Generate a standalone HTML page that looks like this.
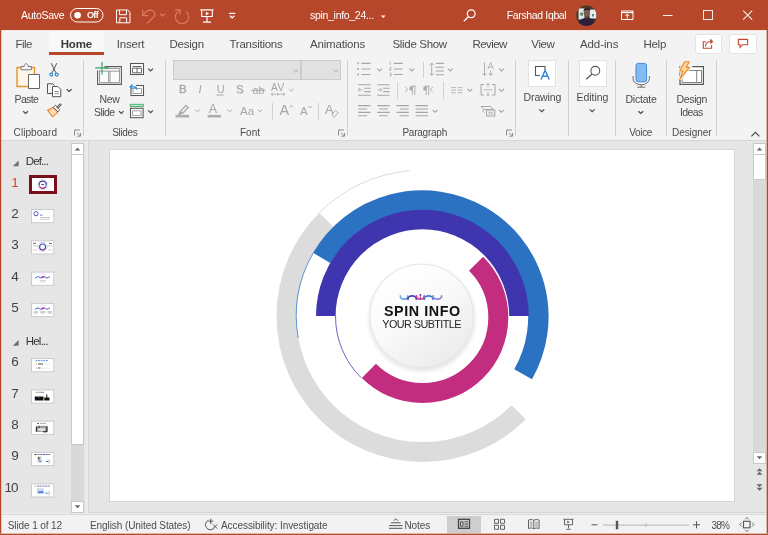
<!DOCTYPE html>
<html><head><meta charset="utf-8">
<style>
*{box-sizing:border-box;margin:0;padding:0}
html,body{width:768px;height:535px;overflow:hidden;background:#e6e6e6;font-family:"Liberation Sans",sans-serif}
#w{position:absolute;left:0;top:0;width:768px;height:535px;overflow:hidden;background:#e6e6e6}
.a{position:absolute}
.t{position:absolute;white-space:nowrap;line-height:1;font-family:"Liberation Sans",sans-serif}
svg{position:absolute;left:0;top:0}
.th{position:absolute;left:31px;width:23px;height:14px;background:#fff;border:1px solid #d2d2d2;overflow:hidden}
</style></head><body>
<div id="w">
<!-- chrome backgrounds -->
<div class="a" style="left:0;top:0;width:768px;height:30px;background:#b7472a"></div>
<div class="a" style="left:0;top:30px;width:768px;height:110px;background:#f3f3f3"></div>
<div class="a" style="left:0;top:30px;width:768px;height:1px;background:#f3e4df"></div>
<div class="a" style="left:0;top:140px;width:768px;height:1px;background:#d6d6d6"></div>
<!-- home tab -->
<div class="a" style="left:49px;top:31px;width:55px;height:22px;background:#f8f8f8"></div>
<div class="a" style="left:49px;top:52px;width:55px;height:2.5px;background:#b7472a"></div>
<!-- share / comments -->
<div class="a" style="left:695px;top:34px;width:26.5px;height:19.5px;background:#fff;border:1px solid #e4e4e4;border-radius:2px"></div>
<div class="a" style="left:729px;top:34px;width:27.5px;height:19.5px;background:#fff;border:1px solid #e4e4e4;border-radius:2px"></div>
<!-- font combos -->
<div class="a" style="left:173px;top:60px;width:128px;height:20px;background:#e1e1e1;border:1px solid #cbcbcb"></div>
<div class="a" style="left:301px;top:60px;width:40px;height:20px;background:#e1e1e1;border:1px solid #cbcbcb"></div>
<!-- drawing / editing boxes -->
<div class="a" style="left:528px;top:60px;width:28px;height:26.5px;background:#fff;border:1px solid #e2e2e2"></div>
<div class="a" style="left:579px;top:60px;width:28px;height:26.5px;background:#fff;border:1px solid #e2e2e2"></div>

<!-- WORKSPACE -->
<!-- left scrollbar -->
<div class="a" style="left:71px;top:142.5px;width:13px;height:370px;background:#d9d9d9"></div>
<div class="a" style="left:71px;top:142.5px;width:13px;height:12.5px;background:#fff;border:1px solid #c8c8c8"></div>
<div class="a" style="left:71px;top:155px;width:13px;height:290px;background:#fff;border:1px solid #c8c8c8;border-top:0"></div>
<div class="a" style="left:71px;top:500.5px;width:13px;height:12.5px;background:#fff;border:1px solid #c8c8c8"></div>
<!-- splitter -->
<div class="a" style="left:86px;top:141px;width:2px;height:374px;background:#ececec"></div>
<div class="a" style="left:88px;top:141px;width:1px;height:374px;background:#d6d6d6"></div>
<!-- edit area bottom line -->
<div class="a" style="left:89px;top:512px;width:677px;height:1px;background:#d4d4d4"></div>
<!-- right scrollbar -->
<div class="a" style="left:753px;top:142.5px;width:13px;height:321px;background:#d9d9d9"></div>
<div class="a" style="left:753px;top:142.5px;width:13px;height:12.5px;background:#fff;border:1px solid #c8c8c8"></div>
<div class="a" style="left:753px;top:155px;width:13px;height:24.5px;background:#fff;border:1px solid #c8c8c8;border-top:0"></div>
<div class="a" style="left:753px;top:451.5px;width:13px;height:12px;background:#fff;border:1px solid #c8c8c8"></div>
<!-- slide -->
<div class="a" style="left:108.5px;top:148.5px;width:626.5px;height:353px;background:#fff;border:1px solid #d6d6d6"></div>

<!-- thumbnails -->
<div class="a" style="left:28.800px;top:175.300px;width:28px;height:19.200px;background:#fff;border:3px solid #7a0f1c"></div>
<svg width="768" height="535" viewBox="0 0 768 535" fill="none">
<circle cx="42.7" cy="184.7" r="3.5" stroke="#5f7fda" stroke-width="1.1"/>
<path d="M40 187.200a3.600 3.600 0 0 0 5.800-.6" stroke="#c32d80" stroke-width="1.200"/>
<path d="M39 184.700a3.700 3.700 0 0 1 7.400 0" stroke="#3f35ae" stroke-width="1.100"/>
<circle cx="42.700" cy="184.700" r="5.200" stroke="#dcdcdc" stroke-width=".8"/>
<path d="M41.300 184.600h2.800" stroke="#333" stroke-width=".9"/>
<rect x="31.500" y="209.5" width="22.300" height="13.200" fill="#fff" stroke="#cbcbcb" stroke-width="1"/>
<circle cx="36" cy="213.7" r="2.1" stroke="#4a62c8" stroke-width="1"/>
<path d="M35 215.4a2 2 0 0 0 2.400-.4" stroke="#c32d80" stroke-width=".8"/>
<path d="M40 215.1h2.500" stroke="#5a6fd0" stroke-width=".9"/>
<path d="M40 217.7h9.500" stroke="#8fb0b8" stroke-width="1" stroke-dasharray="1.500 .5"/>
<path d="M40 219.5h9.500" stroke="#d9c0c8" stroke-width=".7"/>
<rect x="31.500" y="240.8" width="22.300" height="13.200" fill="#fff" stroke="#cbcbcb" stroke-width="1"/>
<circle cx="42.600" cy="247.0" r="3" stroke="#3f4fc0" stroke-width="1.200"/>
<path d="M40.300 249.0a3 3 0 0 0 4.600 0" stroke="#c32d80" stroke-width="1"/>
<circle cx="42.600" cy="247.0" r="4.600" stroke="#c8d4ee" stroke-width=".6"/>
<path d="M33 243.4h3M49 243.4h3" stroke="#445" stroke-width=".8"/>
<path d="M33 245.9h5.500M47 245.9h5.500" stroke="#9bc0a8" stroke-width=".7"/>
<path d="M33 249.9h4M48.500 249.9h4" stroke="#d8a8b8" stroke-width=".7"/>
<path d="M40.500 242.6h4.500" stroke="#a8b8e8" stroke-width=".7"/>
<rect x="31.500" y="272.1" width="22.300" height="13.200" fill="#fff" stroke="#cbcbcb" stroke-width="1"/>
<path d="M35 277.9c1.500 0 1.500-1.200 3-1.200s1.500 1.200 3 1.200 1.500-1.200 3-1.200 1.500 1.200 3 1.200 1.500-1.200 3-1.200" stroke="#3f55c8" stroke-width="1"/>
<circle cx="42.700" cy="277.1" r="1.100" fill="#d0307c"/>
<path d="M39.500 275.7a3.400 3.400 0 0 1 6.400 0" stroke="#c8cff0" stroke-width=".6"/>
<path d="M39.500 280.7h6.500" stroke="#b8b8c0" stroke-width=".8"/>
<path d="M40 282.1h5.500" stroke="#d8c8d0" stroke-width=".6"/>
<rect x="31.500" y="303.4" width="22.300" height="13.200" fill="#fff" stroke="#cbcbcb" stroke-width="1"/>
<path d="M35 309.2c1.500 0 1.500-1.200 3-1.200s1.500 1.200 3 1.200 1.500-1.200 3-1.200 1.500 1.200 3 1.200 1.500-1.200 3-1.200" stroke="#3f55c8" stroke-width="1"/>
<circle cx="42.700" cy="308.4" r="1.100" fill="#d0307c"/>
<path d="M39.500 307.0a3.400 3.400 0 0 1 6.400 0" stroke="#c8cff0" stroke-width=".6"/>
<path d="M33.500 312.0h4.500M40.300 312.0h5M47.500 312.0h4.500" stroke="#9aa0b0" stroke-width="1.100"/>
<path d="M33.500 313.6h4.500M40.300 313.6h5M47.500 313.6h4.500" stroke="#d0c8d0" stroke-width=".6"/>
<rect x="31.500" y="358.6" width="22.300" height="13.200" fill="#fff" stroke="#cbcbcb" stroke-width="1"/>
<path d="M35.500 360.6h13" stroke="#7fa6d8" stroke-width="1.300" stroke-dasharray="2 .6"/>
<path d="M35.800 364.2h1.200" stroke="#e8a030" stroke-width="1"/><path d="M38 364.0h5" stroke="#333" stroke-width=".9"/>
<path d="M44 364.2h6" stroke="#d8d8d8" stroke-width=".6"/>
<path d="M35.800 368.2h1.200" stroke="#e8a030" stroke-width="1"/><path d="M38 368.0h2.500" stroke="#444" stroke-width=".9"/>
<path d="M41.500 368.2h8.500" stroke="#d0d0d0" stroke-width=".7" stroke-dasharray="1.500 .6"/>
<rect x="31.500" y="389.9" width="22.300" height="13.200" fill="#fff" stroke="#cbcbcb" stroke-width="1"/>
<path d="M35.500 392.3h5" stroke="#c8a060" stroke-width=".9"/><path d="M40.500 392.3h3.500" stroke="#6a78c0" stroke-width=".9"/>
<path d="M34.800 396.5h8.700v4h-8.700zM44.300 397.5h5.200v3h-5.200zM46.300 394.5h1v3h-1z" fill="#111"/>
<path d="M38 397.3h1.200" stroke="#4aa0e0" stroke-width=".8"/>
<rect x="31.500" y="421.2" width="22.300" height="13.200" fill="#fff" stroke="#cbcbcb" stroke-width="1"/>
<path d="M37 423.4h2" stroke="#333" stroke-width=".8"/><path d="M40 423.4h6" stroke="#8a90b8" stroke-width=".8"/>
<path d="M36 425.8h11.500v6h-11.500z" fill="#9a9a9a"/>
<path d="M36.300 426.8v5M39 426.3v5M47 426.3v5.500" stroke="#222" stroke-width="1"/>
<path d="M38 428.3h7v2.500h-7z" fill="#e8e8e8"/>
<path d="M43 431.8h4" stroke="#111" stroke-width="1"/>
<rect x="31.500" y="452.4" width="22.300" height="13.200" fill="#fff" stroke="#cbcbcb" stroke-width="1"/>
<path d="M34.500 454.5h2" stroke="#222" stroke-width=".9"/><path d="M37.500 454.5h13" stroke="#6a58b0" stroke-width=".9" stroke-dasharray="2.200 .5"/>
<path d="M37.500 456.5h4v6h-4z" fill="#c8ccd8"/><path d="M38 457.0h1.500v2.500h-1.500z" fill="#555"/><path d="M39 460.5h2.500v1.800h-2.500z" fill="#7fa8e0"/>
<path d="M46 461.5h2" stroke="#2e70d0" stroke-width="1"/><path d="M48.500 460.0h1.500v3h-1.500z" stroke="#aab" stroke-width=".5"/>
<rect x="31.500" y="483.8" width="22.300" height="13.200" fill="#fff" stroke="#cbcbcb" stroke-width="1"/>
<path d="M34.500 486.1h1.500" stroke="#e0a030" stroke-width=".9"/><path d="M36.800 486.1h13" stroke="#5a70c0" stroke-width=".9" stroke-dasharray="2.200 .5"/>
<path d="M37 488.4h6.500v5.500h-6.500z" fill="#b8cdf0"/><path d="M38.500 491.4h5v1.500h-5z" fill="#3a78e0"/><path d="M38 488.9h3v1.500h-3z" fill="#d8dce8"/>
<path d="M45.500 493.2h2" stroke="#2e70d0" stroke-width="1"/><path d="M48.300 491.7h1.500v3h-1.500z" stroke="#aab" stroke-width=".5"/>
<rect x="31.500" y="515.1" width="22.300" height="13.200" fill="#fff" stroke="#cbcbcb" stroke-width="1"/>
</svg>

<div class="a" style="left:0;top:0;width:768px;height:535px;will-change:transform">
<div class="t" style="left:4.4px;top:511.9px;font-size:13.5px;color:#444;letter-spacing:-0.36px;">11</div>
</div>
<!-- STATUS BAR -->
<div class="a" style="left:0;top:513px;width:768px;height:1px;background:#ebebeb"></div>
<div class="a" style="left:0;top:514px;width:768px;height:1.500px;background:#d9d9d9"></div>
<div class="a" style="left:0;top:515.300px;width:768px;height:20px;background:#f2f2f2"></div>
<div class="a" style="left:447px;top:515.500px;width:34px;height:18px;background:#cecece"></div>

<!-- ICONS + SLIDE ART -->
<svg width="768" height="535" viewBox="0 0 768 535" fill="none">
<defs>
<linearGradient id="cg" x1="0.2" y1="0.1" x2="0.8" y2="0.95"><stop offset="0" stop-color="#ffffff"/><stop offset="0.45" stop-color="#f9f9f9"/><stop offset="1" stop-color="#ebebeb"/></linearGradient>
<radialGradient id="sh" cx="0.5" cy="0.5" r="0.5"><stop offset="0.86" stop-color="#000" stop-opacity="0.13"/><stop offset="1" stop-color="#000" stop-opacity="0"/></radialGradient>
<linearGradient id="gl" x1="0" y1="1" x2="1" y2="0"><stop offset="0" stop-color="#cfcfcf"/><stop offset="1" stop-color="#e2e2e2"/></linearGradient>
</defs>
<path d="M518.67 412.27A136 136 0 0 1 326.33 219.93" stroke="#dcdcdc" stroke-width="20" />
<path d="M319.26 212.86A146 146 0 0 1 409.78 170.66" stroke="#d2d2d2" stroke-width="0.8" />
<path d="M321.87 258.00A116.2 116.2 0 0 1 523.13 374.20" stroke="#2c72c2" stroke-width="20.4" />
<path d="M313.21 253.00A126.2 126.2 0 0 0 298.22 338.01" stroke="#3b7fd0" stroke-width="0.8" />
<path d="M325.80 316.10A96.5 96.5 0 0 1 519.00 316.10" stroke="#3f35ae" stroke-width="19.6" />
<path d="M335.50 316.10A87 87 0 0 0 360.98 377.62" stroke="#4a3db0" stroke-width="0.8" />
<path d="M476.10 263.70A75.8 75.8 0 0 1 368.90 370.90" stroke="#c32d80" stroke-width="20" />
<circle cx="421.8" cy="318.2" r="56" fill="url(#sh)"/>
<circle cx="421.6" cy="315.8" r="51.6" fill="url(#cg)" stroke="#e7e7e7" stroke-width="1.1"/>
<path d="M400.3 295.9a3.80 3.3 0 0 0 7.60 0" stroke="#6ea8e8" stroke-width="1.7" stroke-linecap="round"/>
<path d="M407.9 299.2a4.25 3.3 0 0 1 8.50 0" stroke="#4a3db8" stroke-width="1.7" stroke-linecap="round"/>
<path d="M416.4 295.9a3.90 3.3 0 0 0 7.80 0" stroke="#d03a8a" stroke-width="1.7" stroke-linecap="round"/>
<path d="M424.2 299.2a4.40 3.3 0 0 1 8.80 0" stroke="#3a7bd0" stroke-width="1.7" stroke-linecap="round"/>
<path d="M433.0 295.9a4.30 3.3 0 0 0 8.60 0" stroke="#8a80e0" stroke-width="1.7" stroke-linecap="round"/>
<circle cx="420.3" cy="295" r="1" fill="#4a3db8"/>
<path d="M420.3 296.2v2.8" stroke="#d03a8a" stroke-width="1.2"/>
<!-- ===== TITLE BAR ICONS ===== -->
<g stroke="#fff" stroke-width="1" fill="none">
  <!-- autosave pill -->
  <rect x="70.5" y="8.5" width="32.5" height="13.5" rx="6.75"/>
  <circle cx="77.6" cy="15.2" r="3.3" fill="#fff" stroke="none"/>
  <!-- save -->
  <path d="M116.5 10h11.2l2.3 2.3v10.5h-13.5z"/>
  <path d="M119.5 10v4.7h7v-4.7"/>
  <path d="M119.8 22.8v-5h6.8v5"/>
  <!-- present -->
  <path d="M200.300 9.900h13.200" stroke-width="1.300"/>
  <path d="M201.700 10.200v6.300h10.600v-6.300" stroke-width="1.100"/>
  <path d="M205.800 11.700v3.700l3.300-1.850z" fill="#fff" stroke="none"/>
  <path d="M207 16.600v5.400M203 22.200h8" stroke-width="1.200"/>
  <!-- customize qat -->
  <path d="M229.100 13.400h6.200" stroke-width="1.200"/>
  <path d="M230 15.800l2.150 2.100 2.150-2.100" stroke-width="1.300"/>
  <!-- file dropdown -->
  <path d="M380.8 15.4h4.8l-2.4 2.6z" fill="#fff" stroke="none"/>
  <!-- search -->
  <circle cx="471.2" cy="13.8" r="3.9" stroke-width="1.2"/>
  <path d="M468.4 16.8l-4.6 4.5" stroke-width="1.3"/>
  <!-- ribbon display -->
  <path d="M621.5 11h11.5v8.5h-11.5z"/>
  <path d="M621.5 12.6h11.5" stroke-width="1.2"/>
  <path d="M627.2 18.5v-4M625.3 16l1.9-1.9 1.9 1.9"/>
  <!-- min max close -->
  <path d="M663 15.500h9.500" stroke-opacity=".9"/>
  <rect x="703.500" y="10.500" width="9" height="9" stroke-opacity=".9"/>
  <path d="M743.200 10.600l9 9M752.200 10.600l-9 9" stroke-width="1.050" stroke-opacity=".92"/>
</g>
<!-- undo / redo (dimmed) -->
<g stroke="#dc7a61" stroke-width="1.250" fill="none" stroke-linecap="round" stroke-linejoin="round">
  <path d="M142.700 10v5.600h5"/>
  <path d="M143 15.400c2-4 5.800-6 9-4.900c3.200 1.100 3.700 4.600 1.500 6.800l-6.200 5.800"/>
  <path d="M160.400 14.100l2.200 2 2.200-2" stroke-width="1.300"/>
  <path d="M186.400 11.800A6.700 6.700 0 1 1 177 12.600L180.100 9.900"/>
  <path d="M175.600 9.900h4.500v4.300"/>
</g>
<!-- avatar -->
<clipPath id="av"><circle cx="586.5" cy="15.7" r="10.2"/></clipPath>
<g clip-path="url(#av)">
  <rect x="576" y="5" width="21" height="21" fill="#3b3230"/>
  <rect x="578.500" y="8" width="6" height="11.500" fill="#dfe6ea"/>
  <rect x="589.500" y="9.500" width="7" height="9" fill="#e6ebf0"/>
  <rect x="576" y="5" width="21" height="3.400" fill="#4d3826"/>
  <rect x="580.200" y="12.600" width="2.800" height="3" fill="#5d8a4e"/>
  <rect x="592" y="14" width="2" height="2.500" fill="#6d8a70"/>
  <ellipse cx="586.800" cy="12.600" rx="3.100" ry="4.300" fill="#7b5a50"/>
  <path d="M583.400 11c.3-3.600 6.500-3.600 6.900 0c-2-1.600-5-1.600-6.900 0z" fill="#1d1718"/>
  <path d="M577.500 26.500c.5-6 4-8.500 9.300-8.500s8.800 2.500 9.300 8.500z" fill="#2b1f3a"/>
  <path d="M585.400 17.600l1.400 1.600 1.400-1.600z" fill="#6b4a44"/>
</g>
<!-- share / comments -->
<g stroke="#bf4a30" stroke-width="1.1" fill="none">
  <path d="M706 41.8h-2.7v6.4h8.300v-3"/>
  <path d="M705.400 46.500c.2-3 2.300-4.900 5.600-5"/>
  <path d="M710.300 38.600l3 2.900-3 2.900z" fill="#bf4a30" stroke="none"/>
  <path d="M738.400 39.400h9.200v5.300h-5l-2.600 2.600v-2.600h-1.600z"/>
</g>

<!-- ===== RIBBON separators ===== -->
<g stroke="#d2d2d2" stroke-width="1">
  <path d="M83.500 60v76M165.500 60v76M347.500 60v76M515.500 60v76M568.500 60v76M615.500 60v76M666.500 60v76M716.500 60v76"/>
  <path d="M272.500 103v17M318.500 103v17M423.500 61.500v16.500M397.500 82v17.500M443.500 82v17.500"/>
</g>
<!-- chevrons dark -->
<g stroke="#4a4a4a" stroke-width="1.200" fill="none">
  <path d="M23.200 111.200l2.400 2.300 2.400-2.300"/>
  <path d="M66.800 89.200l2.400 2.300 2.400-2.300"/>
  <path d="M119 111.200l2.300 2.300 2.300-2.300"/>
  <path d="M148.200 68.600l2.400 2.300 2.400-2.300"/>
  <path d="M148.200 110.400l2.400 2.300 2.400-2.300"/>
  <path d="M539.300 109.400l2.500 2.300 2.500-2.300"/>
  <path d="M589.700 109.400l2.500 2.300 2.500-2.300"/>
  <path d="M638.400 111.200l2.400 2.300 2.400-2.300"/>
  <path d="M751.400 136.400l4-4 4 4" stroke-width="1.2"/>
</g>
<!-- dialog launchers -->
<g stroke="#8a8a8a" stroke-width="1" fill="none">
  <path d="M74.500 135.500v-5.500h5.500M76.800 132.500l3.500 3.500M80.500 133v3.200h-3.200"/>
  <path d="M338.500 135.500v-5.500h5.500M340.800 132.500l3.500 3.500M344.500 133v3.200h-3.200"/>
  <path d="M506.500 135.500v-5.500h5.500M508.800 132.500l3.500 3.500M512.500 133v3.200h-3.200"/>
</g>

<!-- ===== CLIPBOARD ===== -->
<g fill="none" stroke-width="1">
  <!-- paste -->
  <path d="M17 67.500h17.500v19h-17.500z" fill="#fef5e8" stroke="#e8912d" stroke-width="1.400"/>
  <path d="M21 69.800v-3.300h3.200c0-1.700 1-2.800 2-2.800s2 1.100 2 2.800h3.200v3.300z" fill="#f3f3f3" stroke="#7a7a7a"/>
  <path d="M28.500 74.500h11v14h-11z" fill="#fff" stroke="#666"/>
  <!-- cut -->
  <path d="M51.200 63.200l4.700 9.600M56.800 63.200l-4.700 9.600" stroke="#555"/>
  <circle cx="51.300" cy="74.600" r="1.500" stroke="#2e86d6" stroke-width="1.100"/>
  <circle cx="56.700" cy="74.600" r="1.500" stroke="#2e86d6" stroke-width="1.100"/>
  <!-- copy -->
  <path d="M52 93.500h-4.500v-9.700h5.300l1.700 1.700" stroke="#555"/>
  <path d="M52.500 86.500h5.300l3 3v7.200h-8.300z" fill="#fff" stroke="#555"/>
  <path d="M54.500 91.500h4.300M54.500 93.700h4.300" stroke="#777" stroke-width=".8"/>
  <!-- format painter -->
  <path d="M47.600 110.300l5.600-3 4.700 4.500-5.300 5z" fill="#fbd3a4" stroke="#ec7a1c" stroke-width="1.100"/>
  <path d="M50.200 111.800l3.600 3.400M52.400 110.200l3.400 3.200" stroke="#fff" stroke-width=".9"/>
  <path d="M53.200 107.300l2.200-2 4.400 4.300-1.900 2.200z" fill="#f3f3f3" stroke="#555" stroke-width=".9"/>
  <path d="M57.800 107.200l2.600-2.600" stroke="#555" stroke-width="2.300" stroke-linecap="round"/>
  <path d="M57.900 107.100l2.400-2.400" stroke="#e8e8e8" stroke-width=".7" stroke-linecap="round"/>
</g>

<!-- ===== SLIDES ===== -->
<g fill="none" stroke="#555" stroke-width="1">
  <!-- new slide -->
  <path d="M97.600 66.600h23.800v17.800h-23.800z" fill="#fbfbfb" stroke="#5a5a5a" stroke-width="1.100"/>
  <path d="M99.500 68.600h20v14h-20z" stroke="#8e8e8e" stroke-width=".9"/>
  <path d="M99.500 71.200h20M108.600 71.200v11.400M110 71.200v11.400" stroke="#8e8e8e" stroke-width=".9"/>
  <path d="M93.500 64.500h11v6h-11z" fill="#f3f3f3" stroke="none"/>
  <path d="M99.500 70.500v4.500M104.500 68.600h1" stroke="#8e8e8e" stroke-width=".9"/>
  <path d="M95.200 67.800h13.500M102 62v12.400" stroke="#2fa866" stroke-width="1.200"/>
  <!-- layout -->
  <rect x="130.500" y="63.500" width="13" height="11" fill="#fff" stroke-width="1.050"/>
  <path d="M132.500 66.500h9M132.500 68.200h9v4.600h-9zM137 68.200v4.600" stroke-width=".9"/>
  <!-- reset -->
  <rect x="131" y="85.500" width="12.500" height="10" fill="#fff" stroke-width="1.050"/>
  <path d="M133 88.500h8.500v5h-8.500z" stroke="#888" stroke-width=".8"/>
  <path d="M128 83h8v5h-8z" fill="#f3f3f3" stroke="none"/>
  <path d="M130.300 86.800h3.700c1.700 0 2.700 1.100 2.700 2.600" stroke="#2e86d6" stroke-width="1.200"/>
  <path d="M132.500 84.500l-2.400 2.300 2.400 2.300" stroke="#2e86d6" stroke-width="1.200"/>
  <!-- section -->
  <rect x="130.300" y="104.300" width="13" height="2.200" fill="#bfe8cf" stroke="#3fae6e" stroke-width=".9"/>
  <rect x="130.500" y="108.300" width="12.600" height="9.400" fill="#fff" stroke-width="1.050"/>
  <path d="M132.500 110.800h8.600v4.800h-8.600z" stroke="#888" stroke-width=".8"/>
</g>

<!-- ===== FONT (disabled) ===== -->
<g fill="none" stroke="#a6a6a6" stroke-width="1">
  <path d="M293.200 69.700l2.400 2.300 2.400-2.300M333.400 69.700l2.400 2.300 2.400-2.300"/>
  <path d="M216.300 95h7.200"/>
  <path d="M251.500 90.300h14"/>
  <path d="M271 94.200h14M273 92.700l-1.800 1.500 1.800 1.500M283 92.700l1.800 1.500-1.800 1.500M277.500 93v2.400" stroke-width=".8"/>
  <path d="M289.200 89l2.200 2.100 2.200-2.100"/>
  <!-- highlighter -->
  <path d="M180.300 111.300l5.600-6 2.400 2.200-5.600 6z" stroke-width="1.150" fill="#e9e9e9"/>
  <path d="M180.300 111.300l-2 3.300 4.400-1.100" stroke-width="1" fill="#a6a6a6"/>
  <path d="M175.500 116.200h13.500" stroke="#adadad" stroke-width="2.600"/>
  <path d="M195.200 109.700l2.300 2.200 2.300-2.200"/>
  <path d="M207.600 116.200h13.500" stroke="#adadad" stroke-width="2.600"/>
  <path d="M227.400 109.700l2.300 2.200 2.300-2.200"/>
  <path d="M257.700 109.700l2.200 2.100 2.200-2.100"/>
  <path d="M289.500 107.300l1.800-1.800 1.800 1.800" stroke-width=".9"/>
  <path d="M308.300 106l1.800 1.800 1.800-1.800" stroke-width=".9"/>
  <!-- eraser -->
  <path d="M331.500 114.600l4.200-4.200 2.600 2.600-4.200 4.200z" fill="#f3f3f3" stroke-width=".9"/>
</g>

<!-- ===== PARAGRAPH (disabled) ===== -->
<g fill="none" stroke="#a6a6a6" stroke-width="1.100">
  <!-- bullets -->
  <path d="M361.500 63.400h9M361.500 69h9M361.500 74.500h9"/>
  <path d="M357.300 62.600h1.700v1.700h-1.700zM357.300 68.200h1.700v1.700h-1.700zM357.300 73.700h1.700v1.700h-1.700z" fill="#a6a6a6" stroke="none"/>
  <path d="M377.200 68.600l2.400 2.300 2.400-2.300"/>
  <!-- numbering -->
  <path d="M393.800 63.400h9M393.800 69h9M393.800 74.500h9"/>
  <path d="M390.300 61.800v3M389.600 67.600h1.500v1.400h-1.500v1.400h1.500M389.600 73h1.500v3h-1.500M389.900 74.500h1.200" stroke-width=".7"/>
  <path d="M409.400 68.600l2.400 2.300 2.400-2.300"/>
  <!-- line spacing -->
  <path d="M431.700 63v12.400M429.600 65.200l2.100-2.200 2.100 2.200M429.600 73.200l2.100 2.200 2.100-2.200" stroke-width=".9"/>
  <path d="M435.800 63.400h8M435.800 67.200h8M435.800 71h8M435.800 74.800h8"/>
  <path d="M447.900 68.600l2.400 2.300 2.400-2.300"/>
  <!-- text direction -->
  <path d="M484.500 62.500v13M482.400 73.300l2.100 2.200 2.100-2.200M490.700 70.500v5M488.600 73.300l2.100 2.200 2.100-2.200" stroke-width=".9"/>
  <path d="M487.800 69.500l2.900-7 2.900 7M488.800 67.200h3.800" stroke-width=".8"/>
  <path d="M499 68.600l2.400 2.300 2.400-2.300"/>
  <!-- indent dec/inc -->
  <path d="M358.200 84.700h12.400M364.200 88.200h6.400M364.200 91.600h6.400M358.200 95.200h12.400"/>
  <path d="M358.400 89.900h4.600M360.200 88l-1.900 1.900 1.900 1.900" stroke-width=".8"/>
  <path d="M377.200 84.700h12.400M383.200 88.200h6.400M383.200 91.600h6.400M377.200 95.200h12.400"/>
  <path d="M377.200 89.900h4.600M380 88l1.900 1.900-1.900 1.900" stroke-width=".8"/>
  <!-- ltr / rtl -->
  <path d="M405.200 87l2.400 2.600-2.400 2.600M432.800 87l-2.400 2.600 2.400 2.600" stroke-width=".8"/>
  <path d="M412.300 95v-8.800M414.800 95v-8.800M415.800 86.200h-4.300" stroke-width=".9"/><path d="M412.300 86.200h-.8a2.200 2.200 0 0 0 0 4.400h.8z" fill="#a6a6a6" stroke="none"/>
  <path d="M426.200 95v-8.800M428.700 95v-8.800M429.700 86.200h-4.300" stroke-width=".9"/><path d="M426.200 86.200h-.8a2.200 2.200 0 0 0 0 4.400h.8z" fill="#a6a6a6" stroke="none"/>
  <!-- columns -->
  <path d="M451 87.600h5M451 90.200h5M451 92.800h5M457.500 87.600h5M457.500 90.200h5M457.500 92.800h5" stroke-width=".8"/>
  <path d="M467.400 89l2.400 2.300 2.400-2.300"/>
  <!-- align text -->
  <path d="M484 84.500h-3v10.500h3M492 84.500h3v10.500h-3" stroke-width="1"/>
  <path d="M483.500 89.800h9M488 83.500v4M488 92v4M486.400 85l1.600-1.600 1.600 1.600M486.400 94.500l1.600 1.600 1.600-1.600" stroke-width=".8"/>
  <path d="M499 89l2.400 2.300 2.400-2.300"/>
  <!-- align rows -->
  <path d="M358.200 105.600h12.400M358.200 109h9M358.200 112.400h12.400M358.200 115.800h9"/>
  <path d="M377.200 105.600h12.400M379 109h8.800M377.200 112.400h12.400M379 115.800h8.800"/>
  <path d="M396.400 105.600h12.400M399.800 109h9M396.400 112.400h12.400M399.800 115.800h9"/>
  <path d="M415.600 105.600h12.400M415.600 109h12.400M415.600 112.400h12.400M415.600 115.800h12.400"/>
  <path d="M432.800 110l2.400 2.300 2.400-2.300"/>
  <!-- smartart -->
  <path d="M481 106.500h9.500l3 3h-9.500l-1.500 1.500 1.500 1.500" stroke-width="1"/>
  <path d="M481 106.500l3 3" stroke-width="1"/>
  <rect x="486.500" y="110" width="8.300" height="6" fill="#f3f3f3" stroke-width="1"/>
  <path d="M488.200 112.300h5M488.200 114h5" stroke-width=".7"/>
  <path d="M499 110l2.400 2.300 2.400-2.300"/>
</g>

<!-- ===== DRAWING / EDITING ===== -->
<g fill="none">
  <rect x="535.500" y="66.500" width="9.500" height="9" stroke="#555" stroke-width="1.100"/>
  <rect x="539.800" y="69.800" width="10.500" height="10.500" fill="#fff"/>
  <path d="M541 79.500l4.100-9.200 4.100 9.200M542.600 76.300h5" stroke="#2e86d6" stroke-width="1.400"/>
  <circle cx="595.300" cy="70.800" r="4.400" stroke="#555" stroke-width="1.100"/>
  <path d="M592 74l-5.800 5.300" stroke="#555" stroke-width="1.200"/>
</g>

<!-- ===== DICTATE ===== -->
<g fill="none">
  <rect x="636" y="63.400" width="10.600" height="18.400" rx="2.200" fill="#83bbee" stroke="#3d8bdb" stroke-width="1"/>
  <path d="M633 76v2.400a8.200 6.400 0 0 0 16.400 0v-2.400" stroke="#6b6b6b" stroke-width="1"/>
  <path d="M641.200 84.800v2.300M637.200 87.200h8" stroke="#6b6b6b" stroke-width="1"/>
</g>

<!-- ===== DESIGN IDEAS ===== -->
<g fill="none">
  <path d="M680 66.700h23.400v17.600h-23.400z" fill="#fff" stroke="#5a5a5a" stroke-width="1.200"/>
  <path d="M682 70.500h19.500M696.700 70.500v12M682 82.500h19.500v-12M682 70.500v12" stroke="#777" stroke-width=".9"/>
  <path d="M684.600 61.800h4.700l-3.100 5.600h3.300l-9.600 11.800 2.900-8.200h-3.100z" fill="#f3f3f3" stroke="#f3f3f3" stroke-width="3"/>
  <path d="M684.600 61.800h4.700l-3.100 5.600h3.300l-9.600 11.800 2.900-8.200h-3.100z" fill="#fcd69a" stroke="#ec8a2c" stroke-width="1.100" stroke-linejoin="round"/>
</g>

<!-- ===== scroll arrows ===== -->
<g fill="#666">
  <path d="M74.700 150.500l2.800-3 2.800 3z"/>
  <path d="M74.700 505.200l2.800 3 2.800-3z"/>
  <path d="M756.700 150.500l2.800-3 2.800 3z"/>
  <path d="M756.700 456.200l2.800 3 2.800-3z"/>
  <path d="M756.500 471.300l3-3 3 3zM756.500 474.800l3-3 3 3z"/>
  <path d="M756.500 484.200l3 3 3-3zM756.500 487.700l3 3 3-3z"/>
  <path d="M12.800 166.200h5.800v-5.800z" fill="#6e6e6e"/>
  <path d="M12.800 345.700h5.800v-5.800z" fill="#6e6e6e"/>
</g>

<!-- ===== STATUS ICONS ===== -->
<g fill="none" stroke="#555" stroke-width="1" transform="translate(0,0.8)">
  <!-- accessibility -->
  <path d="M208.600 519.400a5 5 0 1 0 5.600 8" stroke-width="1"/>
  <path d="M210.800 517.800v5.400M208.600 520.400h4.600" stroke-width="1"/>
  <path d="M213 523.600l4.200 4.200M217.200 523.600l-4.200 4.200" stroke-width="1"/>
  <!-- notes -->
  <path d="M389 527.500h13.500M389 524.800h13.500M391 522h9.500" />
  <path d="M393.500 520l2.300-2 2.300 2" stroke-width=".9"/>
  <!-- normal view -->
  <rect x="458.500" y="518.500" width="11" height="9" stroke-width="1.300" stroke="#444"/>
  <path d="M460.500 521h2.500v4.500h-2.500zM464.500 521h3.500M464.500 523.200h3.500M464.500 525.400h3.500" stroke="#444" stroke-width=".9"/>
  <!-- sorter -->
  <path d="M494.500 518.500h4v4h-4zM500.500 518.500h4v4h-4zM494.500 524.500h4v4h-4zM500.500 524.500h4v4h-4z" stroke-width=".9"/>
  <!-- reading -->
  <path d="M533.800 519.500v8.500M533.800 519.500c-1.500-1-3.500-1-5.300-.3v8.500c1.800-.7 3.800-.7 5.300.3c1.500-1 3.500-1 5.300-.3v-8.500c-1.800-.7-3.800-.7-5.300.3z" stroke-width=".9"/>
  <path d="M529.800 521.500h2.700M529.800 523.300h2.700M529.800 525.100h2.700M535.200 521.500h2.700M535.200 523.300h2.700M535.200 525.100h2.700" stroke-width=".6"/>
  <!-- slideshow -->
  <path d="M563.500 518.500h10M564.500 518.500v5.500h8v-5.500M568.500 524v3.500M566.300 528.500h4.400" stroke-width=".9"/>
  <path d="M567.300 520v2.600l2.400-1.300z" fill="#555" stroke="none"/>
  <!-- zoom -->
  <path d="M591.500 524h6" />
  <path d="M603 524.300h86" stroke="#b5b5b5" stroke-width="1"/>
  <path d="M646 522.500v3.600" stroke="#b5b5b5" stroke-width="1"/>
  <path d="M617 520v8.500" stroke="#555" stroke-width="2.400"/>
  <path d="M693 524h7M696.500 520.500v7" />
  <!-- fit -->
  <rect x="743.500" y="520.500" width="6.500" height="6.500" stroke-width="1.100"/>
  <path d="M744.800 518.600l2-1.800 2 1.800M744.800 529l2 1.800 2-1.800M741.600 521.800l-1.800 2 1.800 2M752 521.800l1.800 2-1.800 2" stroke-width=".8"/>
</g>

</svg>

<div class="a" id="tx" style="left:0;top:0;width:768px;height:535px;will-change:transform">
<div class="t" style="left:21.0px;top:9.8px;font-size:10.5px;color:#fff;letter-spacing:-0.28px;">AutoSave</div>
<div class="t" style="left:87.0px;top:10.9px;font-size:9px;color:#fff;font-weight:bold;letter-spacing:-0.67px;">Off</div>
<div class="t" style="left:310.0px;top:9.8px;font-size:10.5px;color:#fff;letter-spacing:-0.3px;">spin_info_24...</div>
<div class="t" style="left:506.8px;top:9.8px;font-size:10.5px;color:#fff;letter-spacing:-0.36px;">Farshad Iqbal</div>
<div class="t" style="left:15.5px;top:39.0px;font-size:11.5px;color:#4c4c4c;letter-spacing:-0.56px;">File</div>
<div class="t" style="left:60.8px;top:39.0px;font-size:11.5px;color:#3a3a3a;font-weight:bold;letter-spacing:-0.24px;">Home</div>
<div class="t" style="left:116.8px;top:39.0px;font-size:11.5px;color:#4c4c4c;letter-spacing:-0.21px;">Insert</div>
<div class="t" style="left:169.5px;top:39.0px;font-size:11.5px;color:#4c4c4c;letter-spacing:-0.25px;">Design</div>
<div class="t" style="left:229.5px;top:39.0px;font-size:11.5px;color:#4c4c4c;letter-spacing:-0.26px;">Transitions</div>
<div class="t" style="left:310.0px;top:39.0px;font-size:11.5px;color:#4c4c4c;letter-spacing:-0.19px;">Animations</div>
<div class="t" style="left:392.5px;top:39.0px;font-size:11.5px;color:#4c4c4c;letter-spacing:-0.32px;">Slide Show</div>
<div class="t" style="left:472.5px;top:39.0px;font-size:11.5px;color:#4c4c4c;letter-spacing:-0.57px;">Review</div>
<div class="t" style="left:531.3px;top:39.0px;font-size:11.5px;color:#4c4c4c;letter-spacing:-0.38px;">View</div>
<div class="t" style="left:580.0px;top:39.0px;font-size:11.5px;color:#4c4c4c;letter-spacing:-0.1px;">Add-ins</div>
<div class="t" style="left:643.5px;top:39.0px;font-size:11.5px;color:#4c4c4c;letter-spacing:-0.29px;">Help</div>
<div class="t" style="left:14.5px;top:93.5px;font-size:10.5px;color:#4c4c4c;letter-spacing:-0.61px;">Paste</div>
<div class="t" style="left:13.6px;top:128.1px;font-size:10px;color:#4c4c4c;letter-spacing:0.07px;">Clipboard</div>
<div class="t" style="left:99.6px;top:93.5px;font-size:10.5px;color:#4c4c4c;letter-spacing:-0.41px;">New</div>
<div class="t" style="left:93.9px;top:107.4px;font-size:10.5px;color:#4c4c4c;letter-spacing:-0.51px;">Slide</div>
<div class="t" style="left:112.3px;top:128.1px;font-size:10px;color:#4c4c4c;letter-spacing:-0.36px;">Slides</div>
<div class="t" style="left:240.0px;top:128.1px;font-size:10px;color:#4c4c4c;">Font</div>
<div class="t" style="left:402.4px;top:128.1px;font-size:10px;color:#4c4c4c;letter-spacing:-0.23px;">Paragraph</div>
<div class="t" style="left:523.5px;top:92.3px;font-size:10.5px;color:#4c4c4c;letter-spacing:-0.1px;">Drawing</div>
<div class="t" style="left:576.6px;top:92.3px;font-size:10.5px;color:#4c4c4c;letter-spacing:-0.07px;">Editing</div>
<div class="t" style="left:625.5px;top:93.5px;font-size:10.5px;color:#4c4c4c;letter-spacing:-0.21px;">Dictate</div>
<div class="t" style="left:629.3px;top:128.1px;font-size:10px;color:#4c4c4c;letter-spacing:-0.35px;">Voice</div>
<div class="t" style="left:676.6px;top:93.5px;font-size:10.5px;color:#4c4c4c;letter-spacing:-0.38px;">Design</div>
<div class="t" style="left:680.0px;top:107.4px;font-size:10.5px;color:#4c4c4c;letter-spacing:-0.64px;">Ideas</div>
<div class="t" style="left:672.0px;top:128.1px;font-size:10px;color:#4c4c4c;letter-spacing:-0.07px;">Designer</div>
<div class="t" style="left:179.0px;top:83.9px;font-size:11.5px;color:#a6a6a6;letter-spacing:-1.27px;-webkit-text-stroke:.4px #a6a6a6;">B</div>
<div class="t" style="left:198.5px;top:83.9px;font-size:11.5px;color:#a6a6a6;letter-spacing:2.3px;font-style:italic;">I</div>
<div class="t" style="left:216.8px;top:84.1px;font-size:11px;color:#a6a6a6;letter-spacing:-1.75px;">U</div>
<div class="t" style="left:235.9px;top:83.9px;font-size:11.5px;color:#a6a6a6;letter-spacing:-1.47px;text-shadow:0.7px 0.7px 0 #d0d0d0;">S</div>
<div class="t" style="left:252.5px;top:84.7px;font-size:10.5px;color:#a6a6a6;letter-spacing:0.16px;">ab</div>
<div class="t" style="left:271.0px;top:82.9px;font-size:10px;color:#a6a6a6;letter-spacing:0.6px;">AV</div>
<div class="t" style="left:208.7px;top:102.8px;font-size:12.5px;color:#a6a6a6;letter-spacing:2.96px;">A</div>
<div class="t" style="left:240.0px;top:105.7px;font-size:11.5px;color:#a6a6a6;letter-spacing:-0.04px;">Aa</div>
<div class="t" style="left:279.5px;top:103.2px;font-size:14.5px;color:#a6a6a6;letter-spacing:-0.17px;">A</div>
<div class="t" style="left:300.0px;top:105.8px;font-size:11.5px;color:#a6a6a6;letter-spacing:0.13px;">A</div>
<div class="t" style="left:324.7px;top:103.1px;font-size:13.5px;color:#a6a6a6;letter-spacing:-0.22px;">A</div>
<div class="t" style="left:25.7px;top:156.3px;font-size:11.5px;color:#333;letter-spacing:-0.86px;">Def...</div>
<div class="t" style="left:25.7px;top:335.7px;font-size:11.5px;color:#333;letter-spacing:-0.76px;">Hel...</div>
<div class="t" style="left:11.2px;top:175.6px;font-size:13.5px;color:#d6492a;letter-spacing:-2.12px;">1</div>
<div class="t" style="left:11.2px;top:206.9px;font-size:13.5px;color:#444;letter-spacing:-1.02px;">2</div>
<div class="t" style="left:11.2px;top:238.2px;font-size:13.5px;color:#444;letter-spacing:-1.02px;">3</div>
<div class="t" style="left:11.2px;top:269.5px;font-size:13.5px;color:#444;letter-spacing:-1.02px;">4</div>
<div class="t" style="left:11.2px;top:300.8px;font-size:13.5px;color:#444;letter-spacing:-1.02px;">5</div>
<div class="t" style="left:11.2px;top:355.4px;font-size:13.5px;color:#444;letter-spacing:-1.02px;">6</div>
<div class="t" style="left:11.2px;top:386.7px;font-size:13.5px;color:#444;letter-spacing:-1.02px;">7</div>
<div class="t" style="left:11.2px;top:418.0px;font-size:13.5px;color:#444;letter-spacing:-1.02px;">8</div>
<div class="t" style="left:11.2px;top:449.3px;font-size:13.5px;color:#444;letter-spacing:-1.02px;">9</div>
<div class="t" style="left:4.4px;top:480.6px;font-size:13.5px;color:#444;letter-spacing:-0.87px;">10</div>
<div class="t" style="left:7.8px;top:520.5px;font-size:10px;color:#4c4c4c;letter-spacing:-0.11px;">Slide 1 of 12</div>
<div class="t" style="left:90.0px;top:520.5px;font-size:10px;color:#4c4c4c;letter-spacing:-0.08px;">English (United States)</div>
<div class="t" style="left:221.0px;top:520.5px;font-size:10px;color:#4c4c4c;letter-spacing:-0.07px;">Accessibility: Investigate</div>
<div class="t" style="left:404.5px;top:520.5px;font-size:10px;color:#4c4c4c;letter-spacing:-0.12px;">Notes</div>
<div class="t" style="left:711.5px;top:520.5px;font-size:10px;color:#4c4c4c;letter-spacing:-0.84px;">38%</div>
<div class="t" style="left:384.0px;top:303.6px;font-size:14.3px;color:#111;font-weight:bold;letter-spacing:0.57px;">SPIN INFO</div>
<div class="t" style="left:382.3px;top:319.3px;font-size:10.8px;color:#222;letter-spacing:-0.55px;">YOUR SUBTITLE</div>
</div>

<!-- window borders -->
<div class="a" style="left:0;top:30px;width:1px;height:505px;background:#b7472a"></div>
<div class="a" style="left:1px;top:30px;width:1px;height:505px;background:#d9a08f;opacity:.55"></div>
<div class="a" style="left:767px;top:30px;width:1px;height:505px;background:#b7472a"></div>
<div class="a" style="left:766px;top:30px;width:1px;height:505px;background:#d9a08f;opacity:.7"></div>
<div class="a" style="left:0;top:534px;width:768px;height:1px;background:#b7472a"></div>
<div class="a" style="left:0;top:533px;width:768px;height:1px;background:#d9a08f;opacity:.7"></div>
</div>
</body></html>
